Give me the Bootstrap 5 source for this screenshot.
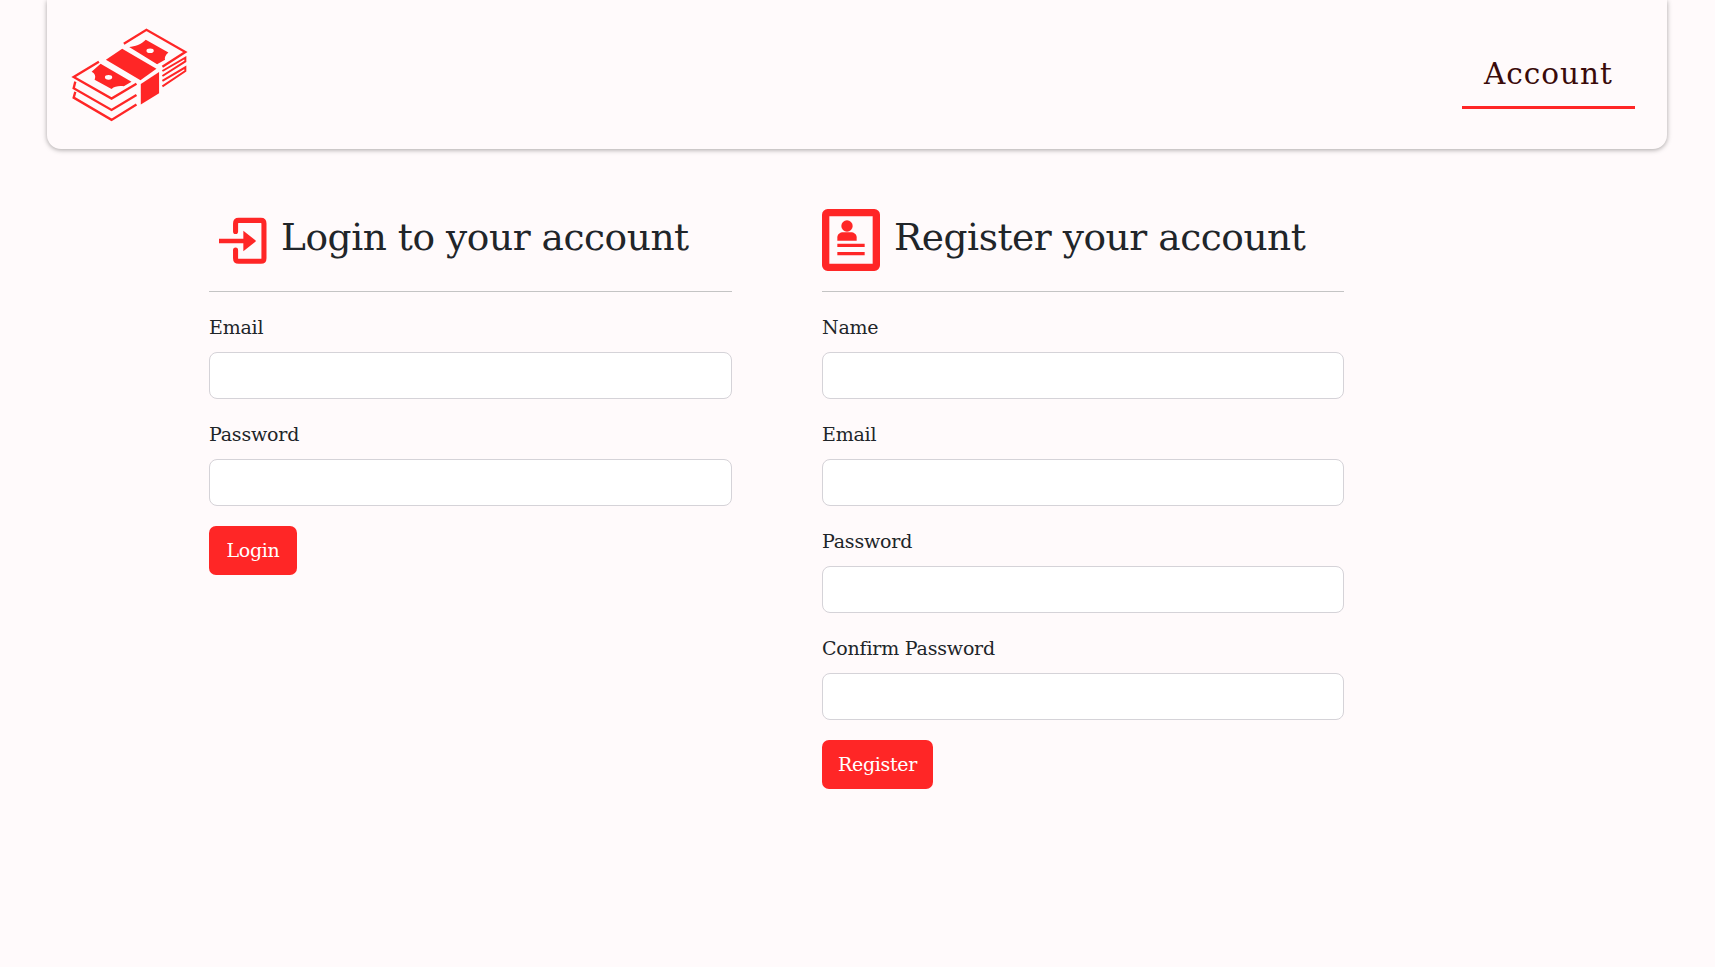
<!DOCTYPE html>
<html lang="en">
<head>
  <meta charset="UTF-8">
  <meta name="viewport" content="width=device-width, initial-scale=1">
  <title>Account</title>
  <link href="https://cdn.jsdelivr.net/npm/bootstrap@5.3.3/dist/css/bootstrap.min.css" rel="stylesheet">
  <style>
    body {
      background-color: #fffafb;
      font-family: "DejaVu Serif", "Liberation Serif", serif;
      color: #212529;
    }
    .top-bar {
      margin: 0 48px 0 47px;
      height: 149px;
      padding: 0 32px 0 23px;
      background-color: #fffafb;
      border-radius: 0 0 14px 14px;
      box-shadow: 0 1px 5px rgba(0, 0, 0, .35);
    }
    .brand-logo {
      display: block;
      width: 118px;
      height: 95px;
    }
    .account-link {
      display: block;
      width: 173px;
      padding: 0 0 10px;
      margin-top: 12px;
      text-align: center;
      font-size: 29.5px;
      letter-spacing: 1px;
      color: #3a0a0a;
      border-bottom: 3px solid #ff2626;
    }
    .forms-wrap {
      margin-left: 209px;
      margin-top: 60px;
      gap: 90px;
    }
    .form-col {
      width: 523px;
    }
    .form-col + .form-col {
      width: 522px;
    }
    .form-head {
      height: 83px;
      border-bottom: 1px solid #c4c4c4;
      margin-bottom: 22px;
      align-items: flex-start;
    }
    .form-head h2 {
      font-size: 37.5px;
      line-height: 57px;
      margin: 0;
      font-weight: 400;
      letter-spacing: -.45px;
    }
    .icon-login {
      width: 48px;
      height: 50px;
      margin: 7px 14px 0 10px;
    }
    .icon-register {
      width: 58px;
      height: 62px;
      margin-right: 14px;
    }
    .form-col label {
      font-size: 19px;
      line-height: 26px;
      margin-bottom: 12px;
      letter-spacing: -.2px;
      display: block;
    }
    .form-col .form-control {
      height: 47px;
      background-color: #fff;
      border-color: #d5d3d8;
      border-radius: 8px;
    }
    .field-gap {
      margin-bottom: 22px;
    }
    .field-last {
      margin-bottom: 20px;
    }
    .btn-red {
      height: 49px;
      min-width: 88px;
      padding: 0 16px;
      font-size: 19px;
      color: #fff;
      background-color: #ff2626;
      border: 0;
      border-radius: 7px;
      letter-spacing: -.3px;
    }
  </style>
</head>
<body>

  <nav class="top-bar d-flex justify-content-between align-items-center">
    <a href="#" aria-label="Home">
      <svg class="brand-logo" viewBox="90 80 355 285">
        <g fill="none" stroke="#ff2626" stroke-width="7">
          <path d="M252 130 320 88 437 155 368 199"/>
          <path d="M177 184 101 230 215 295 290 250"/>
          <path stroke-width="6" d="M368 212 437 172 437 183 368 227"/>
          <path stroke-width="6" d="M368 242 437 201 437 212 368 258"/>
          <path d="M106 244 101 264 215 329 290 284"/>
          <path d="M106 275 101 292 215 359 290 313"/>
        </g>
        <path fill="#ff2626" d="M198 178 247 145 350 205 302 240Z"/>
        <path fill="#ff2626" d="M303 251 358 215V279L303 313Z"/>
        <path fill="#ff2626" fill-rule="evenodd" d="M268 140C285 138 305 132 318 118L386 156C376 164 374 172 376 178L352 192ZM320 151a11 7 0 1 0 22 0a11 7 0 1 0-22 0Z"/>
        <path fill="#ff2626" fill-rule="evenodd" d="M182 190 275 244 252 258C238 256 224 258 215 266L164 238C168 228 166 220 155 214ZM195 231a11 7 0 1 0 22 0a11 7 0 1 0-22 0Z"/>
      </svg>
    </a>
    <a href="#" class="account-link text-decoration-none">Account</a>
  </nav>

  <div class="forms-wrap d-flex">
    <div class="form-col">
      <div class="form-head d-flex">
        <svg class="icon-login" viewBox="58 50 142 140">
          <path fill="none" stroke="#ff2626" stroke-width="15" stroke-linecap="round" d="M107 92V68Q107 59 116 59H182Q191 59 191 68V171Q191 180 182 180H116Q107 180 107 171V147"/>
          <path fill="#ff2626" d="M58 113H130V90L168 120 130 150V127H58Z"/>
        </svg>
        <h2>Login to your account</h2>
      </div>
      <form>
        <div class="field-gap">
          <label for="loginEmail" class="form-label">Email</label>
          <input type="email" id="loginEmail" class="form-control">
        </div>
        <div class="field-last">
          <label for="loginPassword" class="form-label">Password</label>
          <input type="password" id="loginPassword" class="form-control">
        </div>
        <button type="button" class="btn btn-red">Login</button>
      </form>
    </div>

    <div class="form-col">
      <div class="form-head d-flex">
        <svg class="icon-register" viewBox="36 27 174 186">
          <rect x="47" y="38" width="152" height="164" rx="6" fill="none" stroke="#ff2626" stroke-width="22"/>
          <circle cx="111" cy="78" r="17" fill="#ff2626"/>
          <path fill="#ff2626" d="M82 122V112C82 103 90 97 100 97H122C132 97 140 103 140 112V122Z"/>
          <path fill="#ff2626" d="M82 131H164V141H82ZM82 156H164V166H82Z"/>
        </svg>
        <h2>Register your account</h2>
      </div>
      <form>
        <div class="field-gap">
          <label for="regName" class="form-label">Name</label>
          <input type="text" id="regName" class="form-control">
        </div>
        <div class="field-gap">
          <label for="regEmail" class="form-label">Email</label>
          <input type="email" id="regEmail" class="form-control">
        </div>
        <div class="field-gap">
          <label for="regPassword" class="form-label">Password</label>
          <input type="password" id="regPassword" class="form-control">
        </div>
        <div class="field-last">
          <label for="regConfirm" class="form-label">Confirm Password</label>
          <input type="password" id="regConfirm" class="form-control">
        </div>
        <button type="button" class="btn btn-red">Register</button>
      </form>
    </div>
  </div>

  <script src="https://cdn.jsdelivr.net/npm/bootstrap@5.3.3/dist/js/bootstrap.bundle.min.js"></script>
</body>
</html>
